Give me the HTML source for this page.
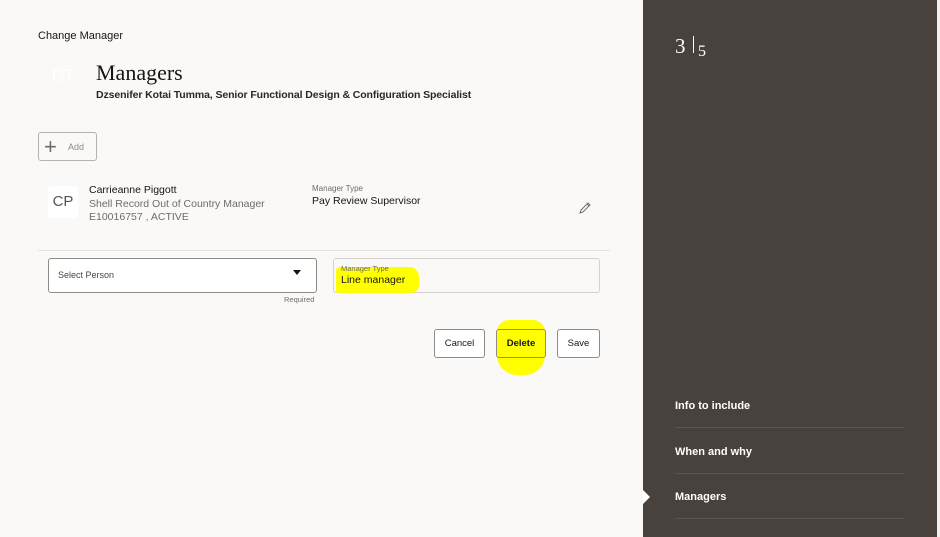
<!DOCTYPE html>
<html><head><meta charset="utf-8"><style>
*{margin:0;padding:0;box-sizing:border-box}
body{width:940px;height:537px;position:relative;background:#fbf9f8;font-family:"Liberation Sans",sans-serif;color:#161513;overflow:hidden}
.a{position:absolute;white-space:nowrap}
.side{position:absolute;left:643px;top:0;width:294px;height:537px;background:#47423d}
.edge{position:absolute;left:937px;top:0;width:3px;height:537px;background:#f3f1ef}
.nav{position:absolute;left:32px;width:230px;color:#fff;font-size:11px;font-weight:bold;border-bottom:1px solid #5a544e;height:28px}
.btn{position:absolute;height:29px;border:1px solid #8e8a86;border-radius:3px;background:#fff;font-size:9.5px;text-align:center;line-height:27px;color:#161513}
</style></head><body>
<div class="a" style="left:38px;top:30px;font-size:11px">Change Manager</div>
<div class="a" style="left:52px;top:66px;font-size:17px;color:#fff">DT</div>
<div class="a" style="left:96px;top:60px;font-size:22px;font-family:'Liberation Serif',serif">Managers</div>
<div class="a" style="left:96px;top:89px;font-size:10.5px;font-weight:bold;color:#2a2724;letter-spacing:-0.1px">Dzsenifer Kotai Tumma, Senior Functional Design &amp; Configuration Specialist</div>
<div style="position:absolute;left:38px;top:132px;width:59px;height:29px;border:1px solid #b5b1ad;border-radius:3px;background:#fbf9f8"></div>
<div class="a" style="left:44px;top:134px;font-size:22px;color:#6f6b67;font-weight:300">+</div>
<div class="a" style="left:68px;top:142px;font-size:9px;color:#8e8a86">Add</div>
<div style="position:absolute;left:48px;top:186px;width:30px;height:32px;background:#fff;border-radius:3px;font-size:15px;color:#555;text-align:center;line-height:32px">CP</div>
<div class="a" style="left:89px;top:184px;font-size:10.5px">Carrieanne Piggott</div>
<div class="a" style="left:89px;top:198px;font-size:10.5px;color:#6f6b67">Shell Record Out of Country Manager</div>
<div class="a" style="left:89px;top:211px;font-size:10.5px;color:#6f6b67">E10016757 , ACTIVE</div>
<div class="a" style="left:312px;top:184px;font-size:8px;color:#6f6b67">Manager Type</div>
<div class="a" style="left:312px;top:195px;font-size:10.5px">Pay Review Supervisor</div>
<svg class="a" style="left:578px;top:201px" width="14" height="14" viewBox="0 0 14 14"><path d="M2 12 L3 9 L10 2 L12 4 L5 11 Z M9 3 L11 5" fill="none" stroke="#6f6b67" stroke-width="1"/></svg>
<div style="position:absolute;left:38px;top:250px;width:572px;height:1px;background:#e4e1de"></div>
<div style="position:absolute;left:48px;top:258px;width:269px;height:35px;border:1px solid #8e8a86;border-radius:3px;background:#fff"></div>
<div class="a" style="left:58px;top:270px;font-size:9px;color:#4a4642">Select Person</div>
<div class="a" style="left:293px;top:270px;width:0;height:0;border-left:4px solid transparent;border-right:4px solid transparent;border-top:5px solid #161513"></div>
<div class="a" style="left:284px;top:295px;font-size:7.5px;color:#6f6b67">Required</div>
<div style="position:absolute;left:333px;top:258px;width:267px;height:35px;border:1px solid #d5d1cd;border-radius:3px;background:#fbf9f8"></div>
<div style="position:absolute;left:336px;top:267px;width:83px;height:26px;background:#ffff00;border-radius:4px 10px 8px 3px"></div>
<div class="a" style="left:341px;top:264px;font-size:7.5px;color:#6f6b67">Manager Type</div>
<div class="a" style="left:341px;top:274px;font-size:10.5px">Line manager</div>
<div class="btn" style="left:434px;top:329px;width:51px">Cancel</div>
<div style="position:absolute;left:497px;top:320px;width:48px;height:55px;background:#ffff00;border-radius:12px 12px 20px 20px"></div>
<div class="btn" style="left:496px;top:329px;width:50px;background:transparent;font-weight:bold">Delete</div>
<div class="btn" style="left:557px;top:329px;width:43px">Save</div>
<div class="side">
<div class="a" style="left:32px;top:34px;font-size:21px;color:#fff;font-family:'Liberation Serif',serif">3</div>
<div class="a" style="left:50px;top:36px;width:1px;height:17px;background:#fff"></div>
<div class="a" style="left:55px;top:43px;font-size:16px;color:#fff;font-family:'Liberation Serif',serif">5</div>
<div class="nav" style="top:400px">Info to include</div>
<div class="nav" style="top:446px">When and why</div>
<div class="nav" style="top:491px">Managers</div>
<div class="a" style="left:0;top:490px;width:0;height:0;border-top:7px solid transparent;border-bottom:7px solid transparent;border-left:7px solid #fff"></div>
</div>
<div class="edge"></div>
</body></html>
